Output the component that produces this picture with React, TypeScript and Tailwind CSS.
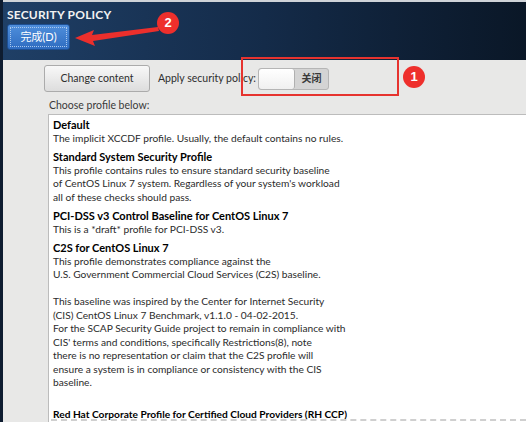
const sans = "font-['Lato','Noto_Sans_CJK_SC',sans-serif]";

type Profile = { title: string; lines: string[]; size?: string };

const profiles: Profile[] = [
  {
    title: "Default",
    lines: ["The implicit XCCDF profile. Usually, the default contains no rules."],
  },
  {
    title: "Standard System Security Profile",
    lines: [
      "This profile contains rules to ensure standard security baseline",
      "of CentOS Linux 7 system. Regardless of your system's workload",
      "all of these checks should pass.",
    ],
  },
  {
    title: "PCI-DSS v3 Control Baseline for CentOS Linux 7",
    lines: ["This is a *draft* profile for PCI-DSS v3."],
  },
  {
    title: "C2S for CentOS Linux 7",
    lines: [
      "This profile demonstrates compliance against the",
      "U.S. Government Commercial Cloud Services (C2S) baseline.",
      "",
      "This baseline was inspired by the Center for Internet Security",
      "(CIS) CentOS Linux 7 Benchmark, v1.1.0 - 04-02-2015.",
      "For the SCAP Security Guide project to remain in compliance with",
      "CIS' terms and conditions, specifically Restrictions(8), note",
      "there is no representation or claim that the C2S profile will",
      "ensure a system is in compliance or consistency with the CIS",
      "baseline.",
      "",
    ],
  },
  {
    title: "Red Hat Corporate Profile for Certified Cloud Providers (RH CCP)",
    lines: [],
    size: "text-[10.2px]",
  },
];

function Badge({ n, className }: { n: string; className: string }) {
  return (
    <div
      className={`absolute w-[22px] h-[22px] rounded-full bg-[#ee2f2c] text-white text-[13px] font-bold flex items-center justify-center font-['Liberation_Sans',sans-serif] ${className}`}
    >
      {n}
    </div>
  );
}

export default function App() {
  return (
    <div className={`relative w-[526px] h-[422px] overflow-hidden flex flex-col bg-[#e8e8e7] border-l-[3px] border-[#0e1c30] ${sans}`}>
      {/* header */}
      <div className="h-[60px] shrink-0 border-t-2 border-[#cfd3d8] bg-gradient-to-r from-[#1f3f66] via-[#142b49] to-[#0a1727] pl-[4px] pt-[5px]">
        <div className="text-[12px] leading-[16px] font-bold text-[#f2f2f2] tracking-[0.2px]">SECURITY POLICY</div>
        <button className="mt-[1px] w-[63px] h-[26px] rounded-[3px] border border-[#1d4f93] bg-gradient-to-b from-[#4f8fdc] to-[#2f6cc0] p-[2px]">
          <div className="h-full w-full border border-dotted border-[#a9c8ee] flex items-center justify-center text-white text-[11px]">
            完成(D)
          </div>
        </button>
      </div>

      {/* controls */}
      <div className="flex items-center pt-[5px] pl-[41px]">
        <button className="w-[106px] h-[27px] rounded-[3px] border border-[#ababab] bg-gradient-to-b from-[#f8f8f8] to-[#dddddd] text-[10.5px] text-[#2e2e2e]">
          Change content
        </button>
        <span className="ml-[8px] text-[10.5px] text-[#2e2e2e]">Apply security policy:</span>
        <div className="ml-[2px] flex h-[22px] w-[71px] rounded-[3px] border border-[#b5b5b5] bg-[#d4d4d4] overflow-hidden">
          <div className="w-[36px] h-full rounded-[3px] border-r border-[#b0b0b0] bg-gradient-to-b from-white to-[#f0f0f0]" />
          <div className="flex-1 flex items-center justify-center text-[10px] font-bold text-[#3a3a3a]">关闭</div>
        </div>
      </div>

      <div className="pl-[46px] mt-[6px] text-[10.5px] leading-[14px] text-[#3a3a3a]">Choose profile below:</div>

      {/* profile list */}
      <div className="ml-[45px] mt-[2px] flex-1 bg-white border-l border-t border-[#bcbcbc] pl-[4px] pt-[3px] text-[10.2px] leading-[13.5px] text-[#2b2b2b]">
        {profiles.map((p, i) => (
          <div key={i} className={i > 0 ? "mt-[5px]" : ""}>
            <div className={`font-bold text-black h-[13.5px] whitespace-nowrap ${p.size ?? "text-[11px]"}`}>{p.title}</div>
            {p.lines.map((l, j) => (
              <div key={j} className="h-[13.5px] whitespace-pre">{l}</div>
            ))}
          </div>
        ))}
      </div>
      <div className="absolute left-[48px] right-0 bottom-[1px] border-b-2 border-dashed border-[#cfcfcf]" />

      {/* annotations */}
      <div className="absolute left-[238px] top-[57px] w-[158px] h-[39px] border-2 border-[#e6332f]" />
      <Badge n="1" className="left-[400px] top-[66px]" />
      <Badge n="2" className="left-[154px] top-[12px]" />
      <svg className="absolute left-0 top-0" width="200" height="60" viewBox="0 0 200 60">
        <polygon
          points="72,38 91,30 89,35 155,27 156,31 90,41 92,46"
          fill="#ec2f2c"
        />
      </svg>
    </div>
  );
}
